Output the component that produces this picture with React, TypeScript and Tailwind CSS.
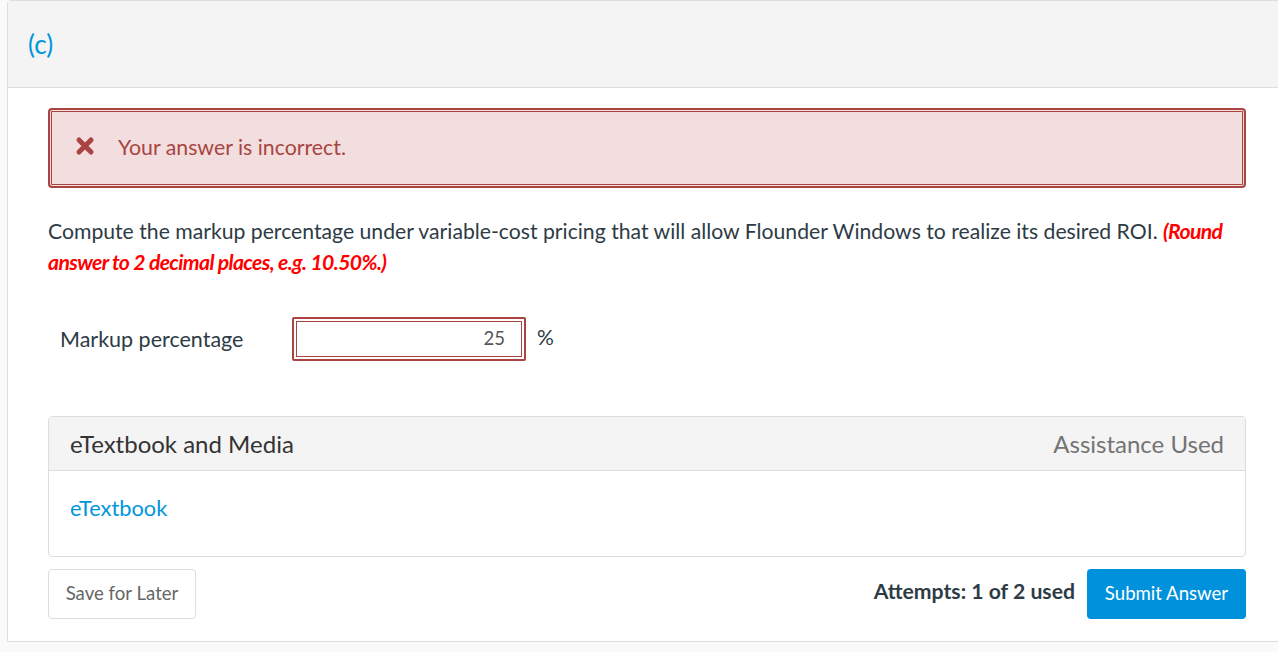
// Question part (c) — incorrect answer state, eTextbook panel and actions
export default function App() {
  return (
    <div className="min-h-screen bg-[#fafafa] pl-[7px] font-['Lato','Liberation_Sans',sans-serif] text-[#2d3b45]">
      <div className="w-[1285px] border border-[#dddddd] rounded-tl-[4px] bg-white">
        {/* Header */}
        <div className="h-[87px] bg-[#f4f4f4] border-b border-[#dddddd] flex items-center pl-[20px]">
          <span className="text-[26px] text-[#0096db] leading-none">(c)</span>
        </div>

        <div className="px-[40px] pt-[20px] pb-[22px]">
          {/* Incorrect alert */}
          <div className="h-[80px] w-[1198px] rounded-[4px] border-2 border-[#a94442] bg-[#f2dede] shadow-[inset_0_0_0_1px_#f2dede,inset_0_0_0_2px_#a94442] flex items-center pl-[25px]">
            <svg width="20" height="20" viewBox="0 0 20 20" className="mr-[23px] mt-[-4px]">
              <path d="M4 4 L16 16 M16 4 L4 16" stroke="#a94442" strokeWidth="5" strokeLinecap="round" />
            </svg>
            <span className="text-[21.3px] text-[#a94442]">Your answer is incorrect.</span>
          </div>

          {/* Question */}
          <p className="mt-[28px] w-[1198px] text-[21.2px] leading-[31px] text-[#2d3b45]">
            Compute the markup percentage under variable-cost pricing that will allow Flounder Windows to realize its desired ROI.{" "}
            <span className="font-bold italic tracking-[-0.65px] text-[#ff0000]">(Round answer to 2 decimal places, e.g. 10.50%.)</span>
          </p>

          {/* Answer row */}
          <div className="mt-[39px] flex items-center">
            <span className="w-[244px] pl-[12px] text-[21.5px] text-[#2d3b45]">Markup percentage</span>
            <div className="w-[234px] h-[44px] border-2 border-[#a94442] p-[2px] rounded-[2px]">
              <div className="h-full border border-[#a94442] flex items-center justify-end pr-[16px] text-[18.5px] text-[#555555]">
                25
              </div>
            </div>
            <span className="ml-[11px] text-[21px] text-[#2d3b45] mt-[-4px]">%</span>
          </div>

          {/* eTextbook and Media */}
          <div className="mt-[55px] w-[1198px] border border-[#dddddd] rounded-[4px] overflow-hidden">
            <div className="h-[54px] bg-[#f4f4f4] border-b border-[#dddddd] flex items-center justify-between px-[21px]">
              <span className="text-[24px] text-[#333333]">eTextbook and Media</span>
              <span className="text-[24px] text-[#737373]">Assistance Used</span>
            </div>
            <div className="h-[85px] px-[21px] pt-[21px]">
              <a className="text-[21.8px] text-[#0096db]">eTextbook</a>
            </div>
          </div>

          {/* Actions */}
          <div className="mt-[12px] w-[1198px] flex items-center justify-between">
            <button className="h-[50px] w-[148px] border border-[#dddddd] rounded-[4px] bg-white text-[18.6px] text-[#666666]">
              Save for Later
            </button>
            <div className="flex items-center">
              <span className="text-[21.2px] font-bold text-[#2d3b45] mr-[12px] mt-[-4px]">Attempts: 1 of 2 used</span>
              <button className="h-[50px] w-[159px] rounded-[4px] bg-[#0091dc] text-[18.6px] text-white">
                Submit Answer
              </button>
            </div>
          </div>
        </div>
      </div>
    </div>
  );
}
